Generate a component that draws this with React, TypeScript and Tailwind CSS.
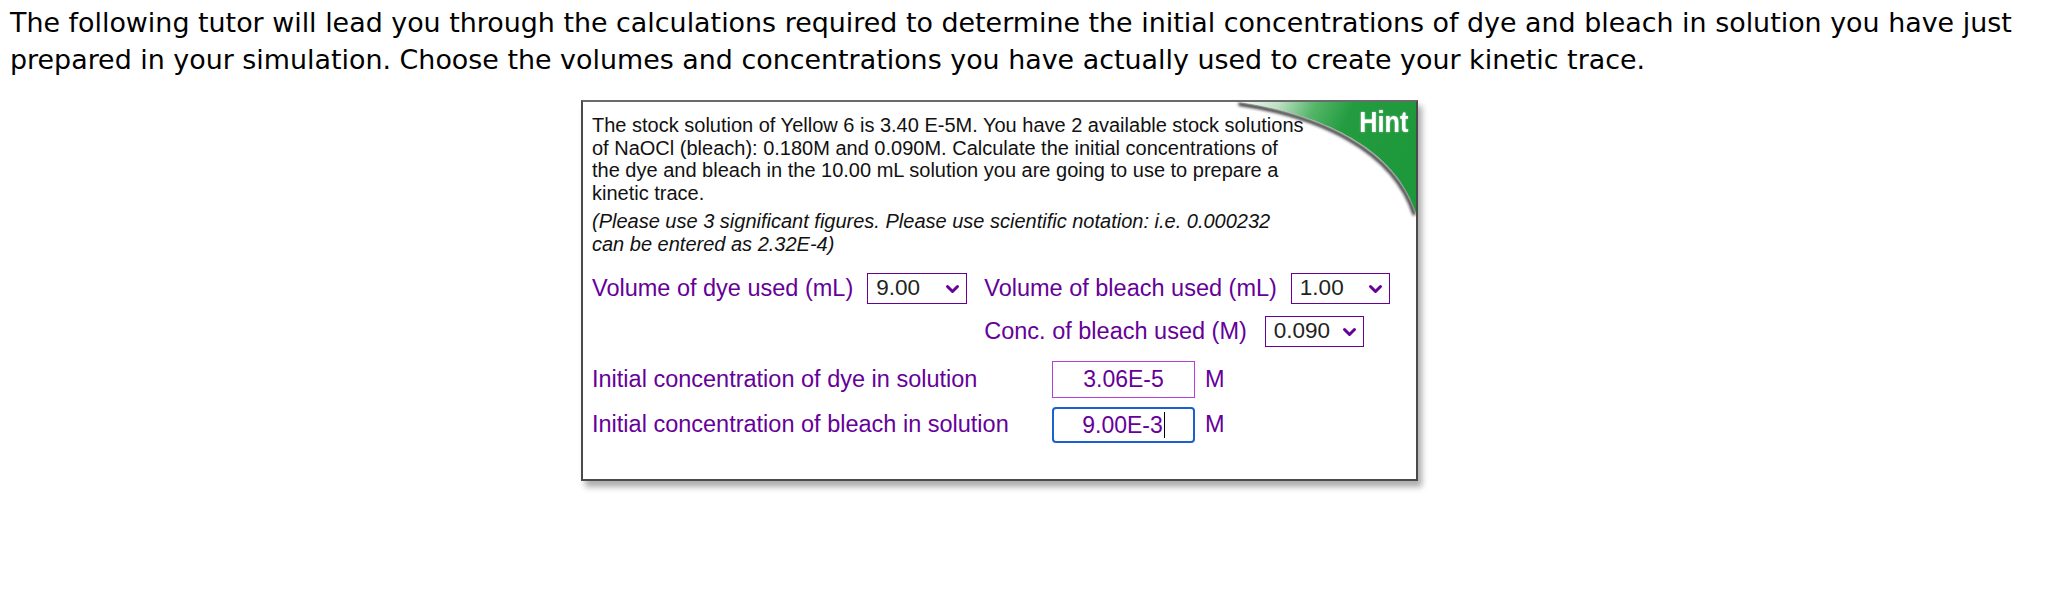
import React from "react";

const Chevron = () => (
  <svg width="15" height="10" viewBox="0 0 15 10" className="shrink-0">
    <polyline points="2.5,2.5 7.5,7.5 12.5,2.5" fill="none" stroke="#660099" strokeWidth="3" strokeLinecap="round" strokeLinejoin="round" />
  </svg>
);

const FakeSelect = ({ value, width }: { value: string; width: string }) => (
  <div className={`flex h-[31px] ${width} items-center justify-between border-[1.5px] border-[#660099] bg-white pl-[8px] pr-[6px] text-[22.5px] leading-none text-[#222]`}>
    <span>{value}</span>
    <Chevron />
  </div>
);

export default function App() {
  return (
    <div className="h-[611px] w-[2051px] bg-white" style={{ fontFamily: '"Liberation Sans", Arial, sans-serif' }}>
      <div
        className="whitespace-nowrap pl-[10px] pt-[5px] text-[26.9px] leading-[36.5px] text-black"
        style={{ fontFamily: '"DejaVu Sans", Verdana, sans-serif' }}
      >
        The following tutor will lead you through the calculations required to determine the initial concentrations of dye and bleach in solution you have just
        <br />
        prepared in your simulation. Choose the volumes and concentrations you have actually used to create your kinetic trace.
      </div>

      <div className="relative ml-[581px] mt-[22px] w-[837px] border-2 border-[#4a4a4a] border-t-[#6a6a6a] bg-white pb-[36px] pl-[9px] pt-[12px] shadow-[4px_6px_6px_rgba(0,0,0,0.32)]">
        <div className="text-[20px] leading-[22.5px] text-[#111]">
          The stock solution of Yellow 6 is 3.40 E-5M. You have 2 available stock solutions
          <br />
          of NaOCl (bleach): 0.180M and 0.090M. Calculate the initial concentrations of
          <br />
          the dye and bleach in the 10.00 mL solution you are going to use to prepare a
          <br />
          kinetic trace.
        </div>
        <div className="mt-[6px] text-[20px] italic leading-[22.5px] text-[#111]">
          (Please use 3 significant figures. Please use scientific notation: i.e. 0.000232
          <br />
          can be entered as 2.32E-4)
        </div>

        <div className="mt-[18px] grid grid-cols-[auto_auto] justify-start gap-x-[17px] gap-y-[12px] text-[23.5px] leading-none text-[#660099]">
          <div className="flex items-center gap-[14px]">
            <span>Volume of dye used (mL)</span>
            <FakeSelect value="9.00" width="w-[100px]" />
          </div>
          <div className="flex items-center gap-[14px]">
            <span>Volume of bleach used (mL)</span>
            <FakeSelect value="1.00" width="w-[99px]" />
          </div>
          <div />
          <div className="flex items-center gap-[18px]">
            <span>Conc. of bleach used (M)</span>
            <FakeSelect value="0.090" width="w-[99px]" />
          </div>
        </div>

        <div className="mt-[14px] grid grid-cols-[460px_143px_auto] items-center justify-start gap-y-[9px] text-[23.5px] leading-none text-[#660099]">
          <span>Initial concentration of dye in solution</span>
          <div className="flex h-[37px] w-[143px] items-center justify-center border border-[#b23ee0] bg-white text-[23px]">3.06E-5</div>
          <span className="ml-[10px]">M</span>
          <span>Initial concentration of bleach in solution</span>
          <div className="flex h-[36px] w-[143px] items-center justify-center rounded-[4px] border-2 border-[#1b5fd1] bg-white text-[23px]">
            <span>9.00E-3</span>
            <span className="ml-px inline-block h-[26px] w-px bg-black" />
          </div>
          <span className="ml-[10px]">M</span>
        </div>

        <svg className="pointer-events-none absolute right-0 top-0" width="206" height="116" viewBox="0 0 206 116">
          <defs>
            <linearGradient id="hintg" x1="0" y1="0" x2="1" y2="0.3">
              <stop offset="0" stopColor="#f6f9f6" />
              <stop offset="0.2" stopColor="#bfe1c6" />
              <stop offset="0.4" stopColor="#55b569" />
              <stop offset="0.6" stopColor="#239c40" />
              <stop offset="1" stopColor="#1d983a" />
            </linearGradient>
            <filter id="hints" x="-20%" y="-20%" width="140%" height="140%">
              <feGaussianBlur stdDeviation="1.4" />
            </filter>
          </defs>
          <path d="M 30,0 C 110,12 185,45 206,111" fill="none" stroke="#1a1a1a" strokeWidth="3" filter="url(#hints)" transform="translate(-1.5,2)" />
          <path d="M 30,0 C 110,12 185,45 206,111 L 206,0 Z" fill="url(#hintg)" />
        </svg>
        <div
          className="absolute right-[8px] top-[5px] origin-right text-[30px] font-bold leading-none text-white"
          style={{ transform: "scaleX(0.84)", textShadow: "0 0 2px rgba(255,255,255,0.7), 0 0 1px rgba(0,80,20,0.6)" }}
        >
          Hint
        </div>
      </div>
    </div>
  );
}
